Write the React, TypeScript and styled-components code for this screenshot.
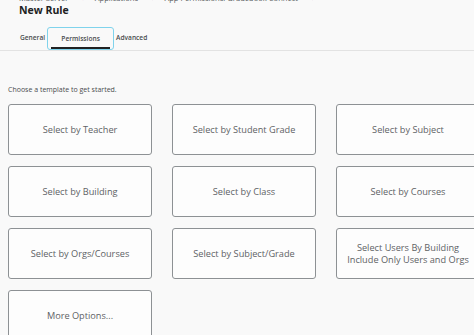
import styled, { createGlobalStyle } from "styled-components";

const GlobalStyle = createGlobalStyle`
  html, body {
    margin: 0;
    padding: 0;
    background: #f9f9f9;
    font-family: "Open Sans", "Noto Sans", sans-serif;
    color: #494c4e;
    overflow: hidden;
  }
`;

const crumbs = [
  "Master Server",
  "Applications",
  "App Permissions: Gradebook Connect",
];

const templates = [
  ["Select by Teacher"],
  ["Select by Student Grade"],
  ["Select by Subject"],
  ["Select by Building"],
  ["Select by Class"],
  ["Select by Courses"],
  ["Select by Orgs/Courses"],
  ["Select by Subject/Grade"],
  ["Select Users By Building", "Include Only Users and Orgs"],
  ["More Options..."],
];

const tabs = ["General", "Permissions", "Advanced"];

const App = () => {
  return (
    <Page>
      <GlobalStyle />
      <Header>
        <Breadcrumbs>
          {crumbs.map((c) => (
            <Crumb key={c}>
              {c}
              <Chevron>&gt;</Chevron>
            </Crumb>
          ))}
        </Breadcrumbs>
        <Title>New Rule</Title>
      </Header>
      <TabBar>
        {tabs.map((t) => (
          <Tab key={t} $active={t === "Permissions"}>
            <TabLabel $active={t === "Permissions"}>{t}</TabLabel>
          </Tab>
        ))}
      </TabBar>
      <Content>
        <Hint>Choose a template to get started.</Hint>
        <Grid>
          {templates.map((lines) => (
            <Card key={lines[0]}>
              {lines.map((l) => (
                <span key={l}>{l}</span>
              ))}
            </Card>
          ))}
        </Grid>
      </Content>
    </Page>
  );
};

const Page = styled.div`
  width: 474px;
  height: 335px;
  overflow: hidden;
`;

const Header = styled.div`
  padding: 0 19px;
  margin-top: -7px;
`;

const Breadcrumbs = styled.div`
  display: flex;
  gap: 8px;
  font-size: 7.6px;
  line-height: 10px;
  white-space: nowrap;
  color: #565a5c;
`;

const Crumb = styled.span`
  display: flex;
  gap: 14px;
`;

const Chevron = styled.span`
  color: #6e7376;
`;

const Title = styled.h1`
  margin: 0;
  font-size: 10.5px;
  line-height: 14px;
  font-weight: 700;
  color: #202122;
`;

const TabBar = styled.div`
  display: flex;
  align-items: stretch;
  padding-left: 19px;
  margin-top: 10px;
  height: 23px;
  border-bottom: 1px solid #e3e3e3;
`;

const Tab = styled.div<{ $active?: boolean }>`
  display: flex;
  align-items: center;
  justify-content: center;
  box-sizing: border-box;
  padding: ${({ $active }) => ($active ? "0 3px" : "0")};
  margin: ${({ $active }) => ($active ? "0 1px 0 1px" : "0")};
  border: 1px solid ${({ $active }) => ($active ? "#7fd3ec" : "transparent")};
  border-radius: 3px;
  font-size: 6.6px;
  font-weight: 600;
  color: #494c4e;
`;

const TabLabel = styled.span<{ $active?: boolean }>`
  display: flex;
  align-items: center;
  justify-content: center;
  height: 100%;
  box-sizing: border-box;
  min-width: ${({ $active }) => ($active ? "59px" : "0")};
  padding-top: ${({ $active }) => ($active ? "1px" : "0")};
  border-bottom: 2px solid ${({ $active }) => ($active ? "#202122" : "transparent")};
`;

const Content = styled.div`
  padding: 0 8px;
`;

const Hint = styled.p`
  margin: 34px 0 0;
  font-size: 7px;
  line-height: 10px;
  color: #494c4e;
`;

const Grid = styled.div`
  display: grid;
  grid-template-columns: repeat(3, 144px);
  grid-auto-rows: 51px;
  column-gap: 20px;
  row-gap: 11px;
  margin-top: 9px;
`;

const Card = styled.div`
  display: flex;
  flex-direction: column;
  align-items: center;
  justify-content: center;
  box-sizing: border-box;
  border: 1px solid #8d9194;
  border-radius: 3px;
  background: #fdfdfd;
  font-size: 9.2px;
  line-height: 12px;
  color: #5e6265;
  text-align: center;
`;

export default App;
